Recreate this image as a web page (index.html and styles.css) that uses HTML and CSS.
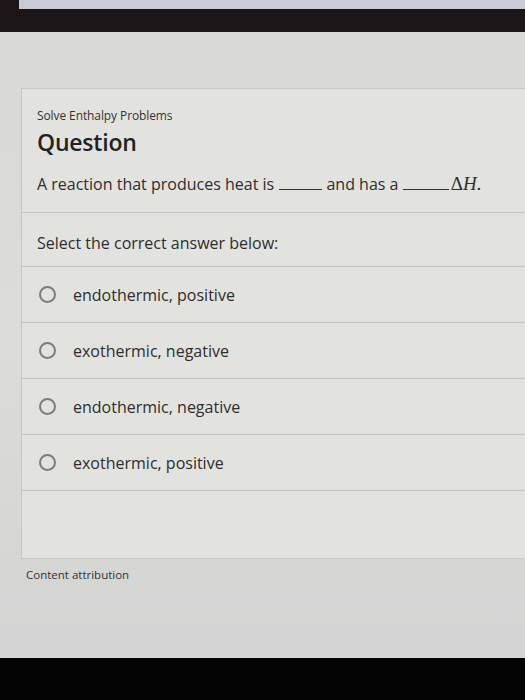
FILE: index.html
```html
<!DOCTYPE html>
<html>
<head>
<meta charset="utf-8">
<link rel="stylesheet" href="styles.css">
</head>
<body>
<div class="topband">
  <div class="strip"></div>
</div>
<main class="page">
  <section class="card">
    <div class="head">
      <div class="crumb">Solve Enthalpy Problems</div>
      <h1 class="title">Question</h1>
      <p class="prompt">A reaction that produces heat is <span class="blank b1"></span> and has a <span class="blank b2"></span><span class="math"><span class="delta">Δ</span><i>H</i>.</span></p>
    </div>
    <div class="select">Select the correct answer below:</div>
    <ul class="options">
      <li class="option"><span class="radio"></span><span>endothermic, positive</span></li>
      <li class="option"><span class="radio"></span><span>exothermic, negative</span></li>
      <li class="option"><span class="radio"></span><span>endothermic, negative</span></li>
      <li class="option"><span class="radio"></span><span>exothermic, positive</span></li>
    </ul>
    <div class="spacer"></div>
  </section>
  <div class="attrib">Content attribution</div>
</main>
<div class="bottom"></div>
</body>
</html>
```

FILE: styles.css
```css
* { box-sizing: border-box; }
html, body { margin: 0; padding: 0; }
body {
  width: 525px;
  height: 700px;
  overflow: hidden;
  background: #060506;
  font-family: "Open Sans", "Liberation Sans", sans-serif;
  color: #2f2f2f;
  display: flex;
  flex-direction: column;
}
.topband {
  height: 32px;
  background: #1c1518;
  padding-left: 19px;
}
.strip {
  height: 9px;
  background: #c9cad6;
}
.page {
  height: 626px;
  background: linear-gradient(180deg, #d9d9d6 0%, #dcdcd9 50%, #d3d4d3 100%);
  padding: 56px 0 0 21px;
  display: flex;
  flex-direction: column;
}
.card {
  background: #e2e2df;
  border: 1px solid #c6c6c3;
  border-right: none;
  margin-right: -10px;
  display: flex;
  flex-direction: column;
}
.head {
  padding: 19px 0 0 15px;
  border-bottom: 1px solid #c4c4c1;
  height: 124px;
}
.crumb {
  font-size: 12px;
  line-height: 16px;
  color: #333;
  letter-spacing: -0.1px;
}
.title {
  margin: 3px 0 0 0;
  font-size: 23px;
  line-height: 30px;
  font-weight: 600;
  color: #222;
  letter-spacing: -0.2px;
}
.prompt {
  margin: 16px 0 0 0;
  font-size: 16px;
  line-height: 22px;
  color: #2e2e2e;
}
.blank {
  display: inline-block;
  border-bottom: 1px solid #333;
  height: 14px;
  vertical-align: baseline;
}
.b1 { width: 43px; margin-left: 1px; }
.b2 { width: 46px; }
.math {
  font-family: "Liberation Serif", "DejaVu Serif", serif;
  font-size: 19px;
  margin-left: 2px;
}
.select {
  height: 54px;
  padding: 19px 0 0 15px;
  font-size: 16px;
  line-height: 22px;
  color: #2e2e2e;
  border-bottom: 1px solid #c4c4c1;
}
.options {
  list-style: none;
  margin: 0;
  padding: 0;
}
.option {
  height: 56px;
  border-bottom: 1px solid #c4c4c1;
  display: flex;
  align-items: center;
  padding-left: 17px;
  gap: 17px;
  font-size: 16px;
  color: #2e2e2e;
}
.radio {
  width: 17px;
  height: 17px;
  border: 2px solid #7d7d7b;
  border-radius: 50%;
  flex: none;
}
.spacer {
  height: 67px;
}
.attrib {
  padding: 8px 0 0 5px;
  font-size: 11.5px;
  line-height: 16px;
  color: #333;
}
.bottom {
  flex: 1;
  background: #050405;
}
```
